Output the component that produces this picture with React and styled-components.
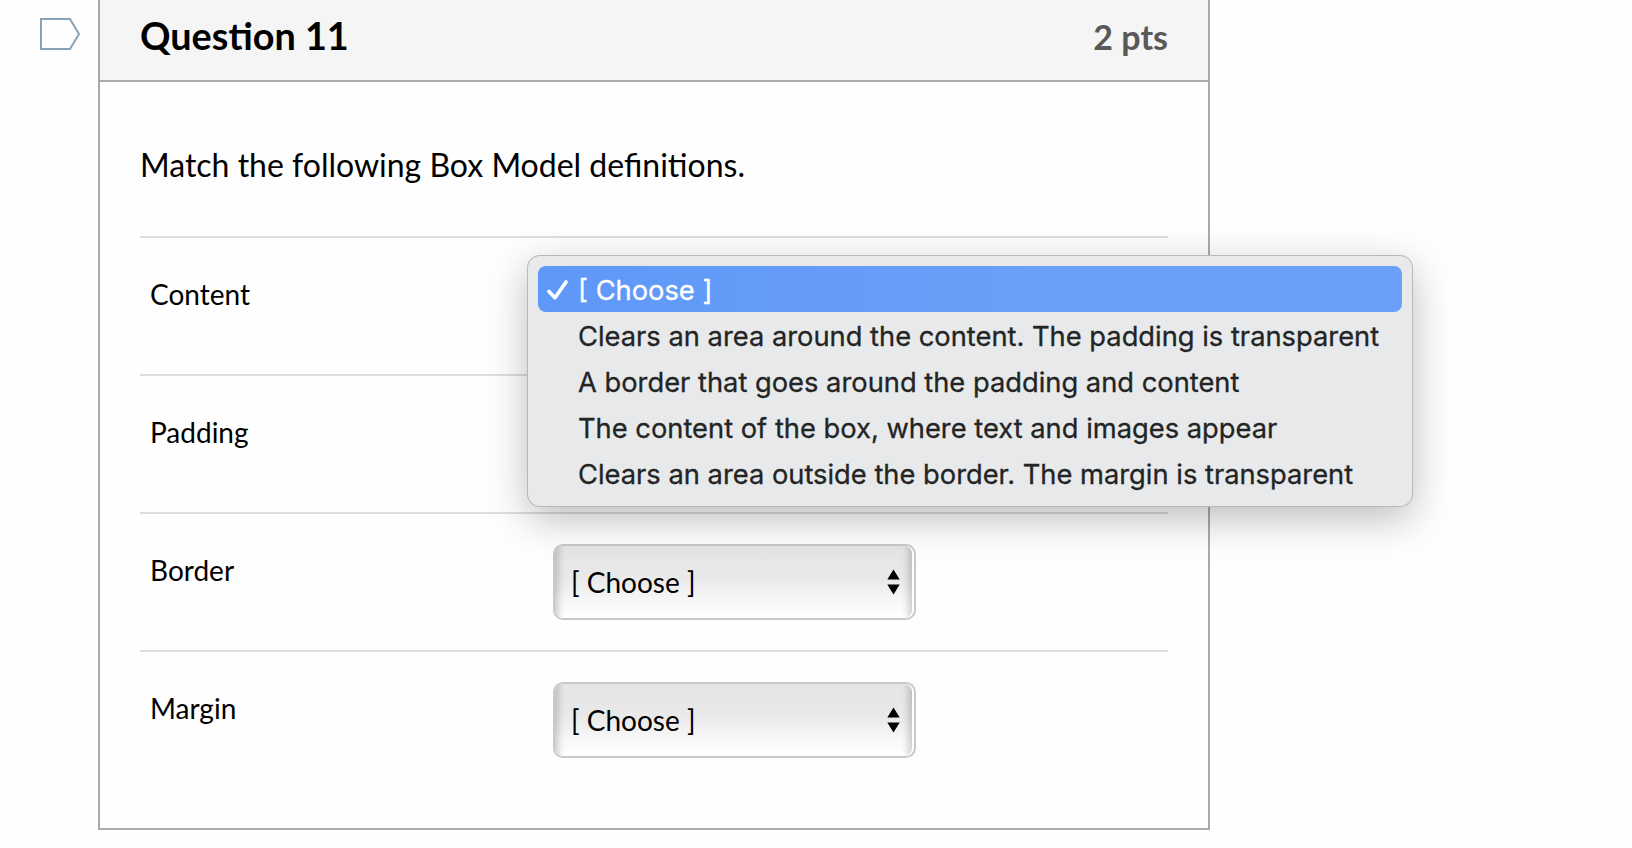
import React from "react";
import styled, { createGlobalStyle } from "styled-components";

const GlobalStyle = createGlobalStyle`
  * {
    box-sizing: border-box;
  }
  body {
    margin: 0;
    background: #fefefe;
    color: #000;
    font-family: Lato, "Liberation Sans", sans-serif;
    overflow: hidden;
  }
`;

const Page = styled.div`
  display: flex;
  align-items: flex-start;
  height: 848px;
`;

const FlagColumn = styled.div`
  width: 98px;
  padding: 18px 0 0 40px;
  svg {
    display: block;
  }
`;

const Card = styled.section`
  width: 1112px;
  height: 830px;
  border: 2px solid #aaa;
  border-top: none;
`;

const Header = styled.header`
  display: flex;
  justify-content: space-between;
  height: 82px;
  padding: 0 40px;
  background: #f5f5f5;
  border-bottom: 2px solid #aaa;
`;

const Title = styled.h2`
  margin: 0;
  padding-top: 14px;
  font-size: 37.8px;
  line-height: 44px;
  font-weight: 700;
`;

const Points = styled.span`
  padding-top: 16px;
  font-size: 34px;
  line-height: 42px;
  font-weight: 700;
  color: #595959;
`;

const Body = styled.div`
  padding: 59px 40px 0;
`;

const Prompt = styled.p`
  margin: 0 0 47px;
  font-size: 32px;
  line-height: 48px;
`;

const Row = styled.div`
  position: relative;
  display: flex;
  height: 138px;
  padding: 30px 0 0 10px;
  border-top: 2px solid #ddd;
`;

const Label = styled.div`
  width: 403px;
  padding-top: 6px;
  font-size: 28px;
  line-height: 40px;
`;

const SelectBox = styled.div`
  width: 363px;
  height: 76px;
  padding-right: 2px;
  border: 2px solid #c9c9c9;
  border-radius: 10px;
  background: #fff;
`;

const SelectInner = styled.div`
  display: flex;
  align-items: center;
  justify-content: space-between;
  height: 72px;
  padding: 0 12px 0 16px;
  border-radius: 8px;
  background: linear-gradient(
      90deg,
      rgba(0, 0, 0, 0.16),
      rgba(0, 0, 0, 0.03) 7px,
      transparent 10px,
      transparent calc(100% - 10px),
      rgba(0, 0, 0, 0.03) calc(100% - 7px),
      rgba(0, 0, 0, 0.16)
    ),
    linear-gradient(#e5e5e5, #e9e9e9 45%, #f7f7f7 75%, #fff);
  font-size: 28px;
  line-height: 40px;
`;

const Menu = styled.ul`
  position: absolute;
  z-index: 2;
  top: 18px;
  left: 388px;
  width: 884px;
  margin: 0;
  padding: 10px;
  list-style: none;
  background: #e8e9eb;
  border-radius: 12px;
  box-shadow: 0 0 0 1px #b9b9b9, 0 12px 40px rgba(0, 0, 0, 0.27);
`;

const Option = styled.li`
  display: flex;
  align-items: center;
  height: 46px;
  padding-top: 1px;
  padding-left: ${(props) => (props.$selected ? "9px" : "40px")};
  border-radius: 8px;
  background: ${(props) =>
    props.$selected ? "linear-gradient(90deg, #5f98f8, #6aa0f8 60%)" : "none"};
  color: ${(props) => (props.$selected ? "#fff" : "#232424")};
  font-family: Inter, "Liberation Sans", sans-serif;
  font-size: 27.3px;
  -webkit-text-stroke: 0.3px;
  white-space: nowrap;
  svg {
    margin-right: 10px;
  }
  span {
    padding-top: 1px;
  }
`;

const options = [
  "[ Choose ]",
  "Clears an area around the content. The padding is transparent",
  "A border that goes around the padding and content",
  "The content of the box, where text and images appear",
  "Clears an area outside the border. The margin is transparent",
];

const rows = [
  { name: "Content", open: true },
  { name: "Padding", covered: true },
  { name: "Border" },
  { name: "Margin" },
];

const FlagIcon = () => (
  <svg width="40" height="32" viewBox="0 0 40 32" fill="none">
    <path d="M1 1H30L39 16L30 31H1Z" stroke="#86a1b8" strokeWidth="2" />
  </svg>
);

const CheckIcon = () => (
  <svg width="21" height="20" viewBox="0 0 21 20" fill="none">
    <path
      d="M2 11.4L8 17.8L19 2"
      stroke="#fff"
      strokeWidth="3.6"
      strokeLinecap="round"
      strokeLinejoin="round"
    />
  </svg>
);

const Arrows = () => (
  <svg width="13" height="26" viewBox="0 0 13 26">
    <path d="M6.5 0.5L12.7 10.5H0.3ZM6.5 25.5L12.7 15.5H0.3Z" fill="#000" />
  </svg>
);

const Select = () => (
  <SelectBox>
    <SelectInner>
      <span>[ Choose ]</span>
      <Arrows />
    </SelectInner>
  </SelectBox>
);

const OptionMenu = () => (
  <Menu>
    {options.map((option, i) => (
      <Option key={option} $selected={i === 0}>
        {i === 0 && <CheckIcon />}
        <span>{option}</span>
      </Option>
    ))}
  </Menu>
);

export default function App() {
  return (
    <>
      <GlobalStyle />
      <Page>
        <FlagColumn>
          <FlagIcon />
        </FlagColumn>
        <Card>
          <Header>
            <Title>Question 11</Title>
            <Points>2 pts</Points>
          </Header>
          <Body>
            <Prompt>Match the following Box Model definitions.</Prompt>
            {rows.map((row) => (
              <Row key={row.name}>
                <Label>{row.name}</Label>
                {row.open && <OptionMenu />}
                {!row.open && !row.covered && <Select />}
              </Row>
            ))}
          </Body>
        </Card>
      </Page>
    </>
  );
}
